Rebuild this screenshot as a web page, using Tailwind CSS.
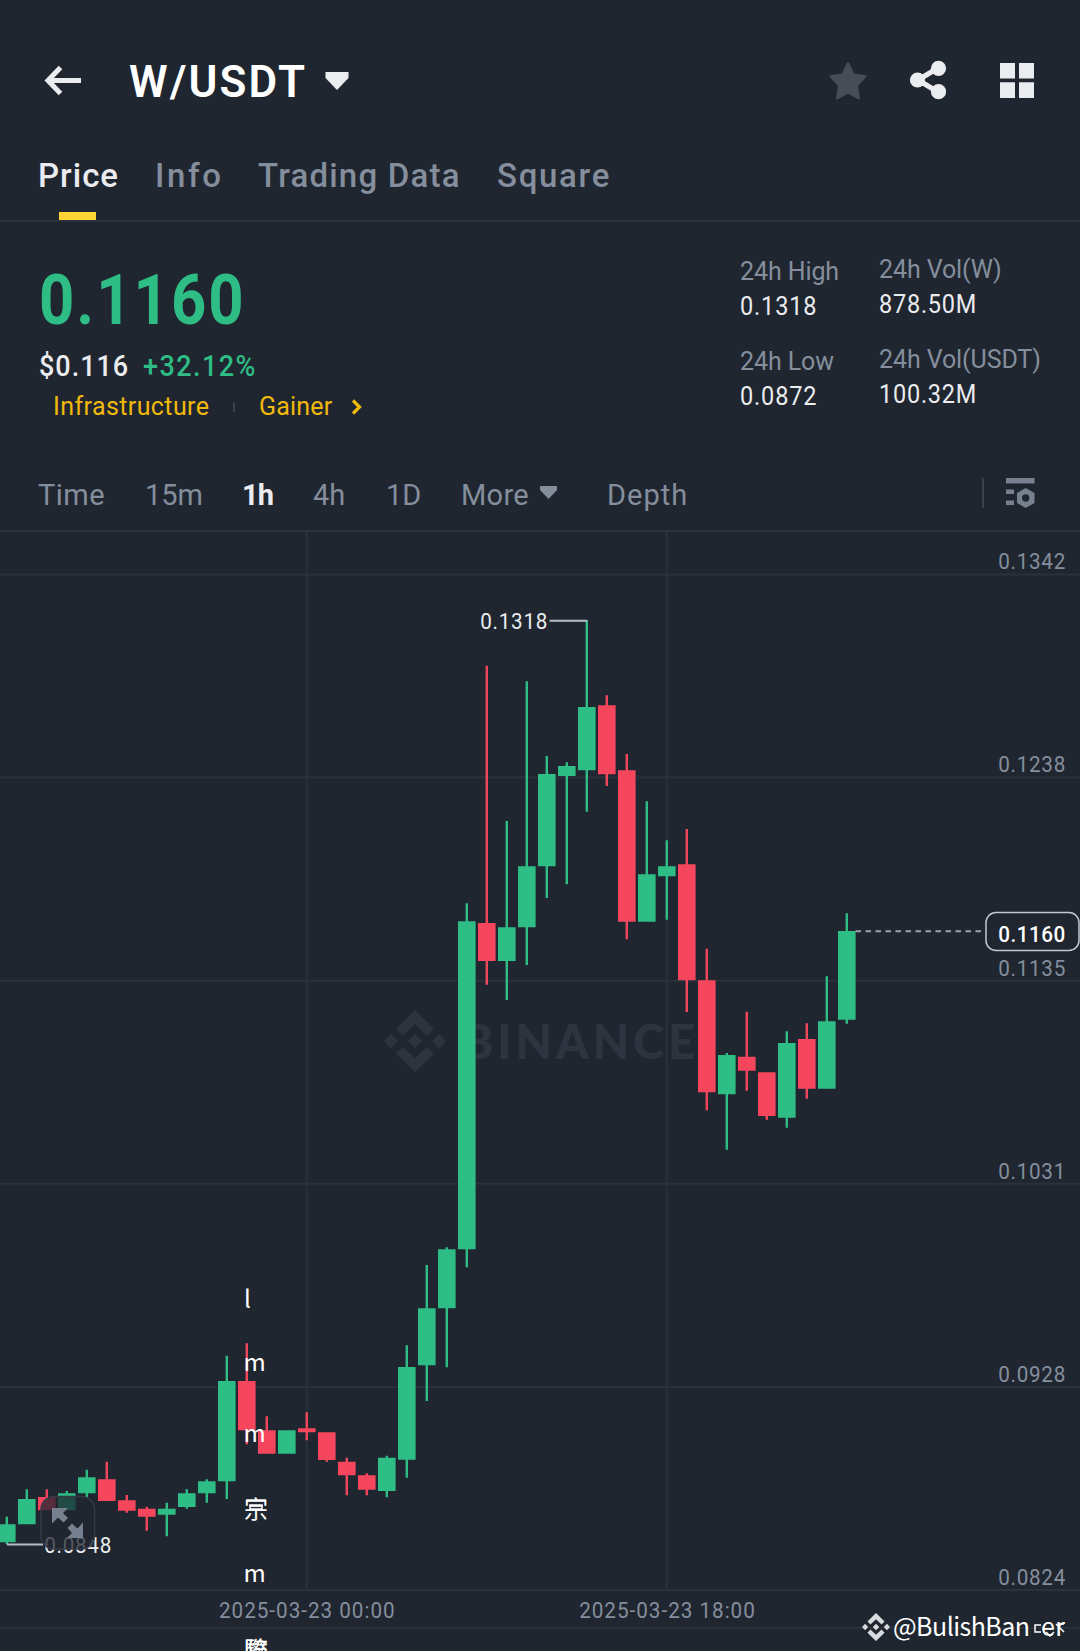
<!DOCTYPE html>
<html lang="en">
<head>
<meta charset="utf-8">
<title>W/USDT</title>
<script src="https://cdn.jsdelivr.net/npm/@tailwindcss/browser@4"></script>
</head>
<body class="bg-[#202630] text-[#eaecef] font-['Roboto',sans-serif]">
<main class="w-[1080px] h-[1651px] overflow-hidden flex flex-col">
  <header class="h-[144px] pt-[20px] pl-[43px] pr-[46px] flex items-center shrink-0">
    <svg class="w-[40px] h-[32px] shrink-0 mb-[2px]" viewBox="0 0 40 32" fill="none" stroke="#eaecef" stroke-width="5"><path d="M38 15.500H6M17.500 2.500L5 15.500l12.500 13"/></svg>
    <h1 class="ml-[46px] w-[196px] text-[44px] leading-[44px] font-semibold text-white whitespace-nowrap tracking-[2.1px]">W/USDT</h1>
    <svg class="w-[24px] h-[20px] shrink-0 mb-[3px]" viewBox="0 0 24 20"><path d="M.5 1h23v6L12 19 .5 7z" fill="#eaecef"/></svg>
    <div class="ml-auto mb-[4px] flex items-center">
      <svg class="w-[38px] h-[40px] mt-[2px]" viewBox="0 0 38 40"><path d="M19 2l5.600 11.500L36.500 15.200l-8.500 9 2 13.300L19 31.700 8 37.500l2-13.300-8.500-9 11.900-1.700z" fill="#474d57" stroke="#474d57" stroke-width="2" stroke-linejoin="round"/></svg>
      <svg class="w-[38px] h-[40px] ml-[42px]" viewBox="0 0 38 40" fill="#eaecef"><path d="M9 20L29 8M9 20l20 12" stroke="#eaecef" stroke-width="5"/><circle cx="8.500" cy="20" r="7.600"/><circle cx="29.500" cy="8.300" r="7.600"/><circle cx="29.500" cy="31.700" r="7.600"/></svg>
      <svg class="w-[34px] h-[35px] ml-[53px]" viewBox="0 0 34 35" fill="#eaecef"><path d="M0 0h15v15.500H0zM19 0h15v15.500H19zM0 19.300h15V35H0zM19 19.300h15V35H19z"/></svg>
    </div>
  </header>
  <nav class="h-[78px] shrink-0 pl-[38px] pt-[12px] flex border-b-2 border-[#2b313b] text-[33px] leading-[40px] font-medium text-[#848e9c] whitespace-nowrap">
    <div class="w-[117px] text-[#eaecef] flex flex-col justify-between tracking-[1px]"><span>Price</span><i class="block w-[37px] h-[8px] ml-[21px] bg-[#fcd535]"></i></div>
    <div class="w-[103px] tracking-[2.6px]">Info</div>
    <div class="w-[239px] tracking-[1.2px]">Trading Data</div>
    <div class="tracking-[1.7px]">Square</div>
  </nav>
  <section class="h-[228px] shrink-0 pl-[39px] flex">
    <div class="w-[701px] pt-[38px] flex flex-col">
      <div class="h-[80px] text-[70px] leading-[80px] font-bold text-[#2ebd85] origin-left scale-x-[.88] tracking-[2.3px]">0.1160</div>
      <div class="mt-[7px] h-[38px] flex text-[30px] leading-[38px] font-medium"><div class="w-[104px] origin-left scale-x-[.9] tracking-[1.1px]">$0.116</div><div class="text-[#2ebd85] origin-left scale-x-[.9] tracking-[1.6px]">+32.12%</div></div>
      <div class="mt-[5px] h-[34px] pl-[14px] flex items-center text-[25px] leading-[34px] text-[#f0b90b]"><div class="w-[180px] tracking-[.4px]">Infrastructure</div><i class="block w-[2px] h-[10px] bg-[#3a414d]"></i><div class="ml-[24px] w-[92px] tracking-[.2px]">Gainer</div><svg class="w-[11px] h-[16px]" viewBox="0 0 11 16" fill="none" stroke="#f0b90b" stroke-width="3.200"><path d="M2 1.500L8.500 8 2 14.500"/></svg></div>
    </div>
    <dl class="w-[139px] pt-[34px] text-[25px] leading-[32px] whitespace-nowrap">
      <dt class="text-[#848e9c] h-[35px] tracking-[-.1px]">24h High</dt><dd class="h-[55px] origin-left scale-x-[.94] tracking-[.9px]">0.1318</dd>
      <dt class="text-[#848e9c] h-[35px] tracking-[-.1px]">24h Low</dt><dd class="origin-left scale-x-[.94] tracking-[.9px]">0.0872</dd>
    </dl>
    <dl class="pt-[32px] text-[25px] leading-[32px] whitespace-nowrap">
      <dt class="text-[#848e9c] h-[35px] tracking-[-.1px]">24h Vol(W)</dt><dd class="h-[55px] origin-left scale-x-[.94] tracking-[.8px]">878.50M</dd>
      <dt class="text-[#848e9c] h-[35px] tracking-[-.1px]">24h Vol(USDT)</dt><dd class="origin-left scale-x-[.94] tracking-[.8px]">100.32M</dd>
    </dl>
  </section>
  <nav class="h-[82px] shrink-0 pt-[26px] pl-[38px] pr-[45px] flex text-[29px] leading-[38px] text-[#848e9c] whitespace-nowrap border-b-2 border-[#2b313b]">
    <div class="w-[107px] tracking-[.5px]">Time</div>
    <div class="w-[97px]">15m</div>
    <div class="w-[71px] text-[#eaecef] font-bold tracking-[-1px]">1h</div>
    <div class="w-[73px]">4h</div>
    <div class="w-[75px]">1D</div>
    <div class="w-[79px] tracking-[.3px]">More</div>
    <svg class="w-[17px] h-[14px] mt-[10px]" viewBox="0 0 17 14"><path d="M0 0h17v4L8.500 13 0 4z" fill="#848e9c"/></svg>
    <div class="ml-[50px] tracking-[1px]">Depth</div>
    <i class="ml-auto mt-[2px] block w-[2px] h-[30px] bg-[#3a414d]"></i>
    <svg class="ml-[22px] mt-[2px] w-[29px] h-[30px]" viewBox="0 0 29 30" fill="#76808f"><path d="M0 0h28.500v5.500H0zM0 11.500h8V16H0zM0 22.500h8V27H0z"/><path fill-rule="evenodd" d="M19.700 10l8.800 5v10l-8.800 5-8.700-5V15zm0 6.300a3.700 3.700 0 100 7.400 3.700 3.700 0 000-7.400z"/></svg>
  </nav>
  <svg id="chart" class="block w-[1080px] h-[1119px] shrink-0" viewBox="0 532 1080 1119" font-size="22.500">
    <path d="M0 574.500H1080M0 777.500H1080M0 980.700H1080M0 1183.800H1080M0 1387H1080M0 1590H1080M0 1628H1080M306.700 532V1590M666.700 532V1590" stroke="#2b313b" stroke-width="2" fill="none"/>
    <defs><path id="bnb" d="M0-31L19-12.500 12.300-5.500 0-17.300-12.300-5.500-19-12.500zM0-7.200L7.200 0 0 7.200-7.200 0zM-24.300-7.200L-17.400 0-24.300 7.200-31 0zM24.300-7.200L31 0 24.300 7.200 17.400 0zM0 31L19 12.500 12.300 5.500 0 17.300-12.300 5.500-19 12.500z"/></defs>
    <g fill="#2e343f"><use href="#bnb" x="415" y="1041.300"/><text x="462" y="1058.500" font-family="Lato" font-weight="900" font-size="47" textLength="233">BINANCE</text></g>
    <g id="candles"></g>
    <g fill="#848e9c" transform="scale(.92 1)">
      <text x="1085" y="569" textLength="73">0.1342</text><text x="1085" y="772" textLength="73">0.1238</text><text x="1085" y="976" textLength="73">0.1135</text><text x="1085" y="1179" textLength="73">0.1031</text><text x="1085" y="1382" textLength="73">0.0928</text><text x="1085" y="1585" textLength="73">0.0824</text>
      <text x="238" y="1618.500" textLength="191">2025-03-23 00:00</text><text x="629.500" y="1618.500" textLength="191">2025-03-23 18:00</text>
    </g>
    <path d="M549.500 620.700H587.500M7 1544.500H43" stroke="#b7bdc6" stroke-width="2"/>
    <g fill="#eaecef" transform="scale(.92 1)"><text x="522" y="629" textLength="73">0.1318</text><text x="48" y="1553.500" textLength="73">0.0848</text></g>
    <path d="M855.500 931.300H982" stroke="#9aa1ad" stroke-width="2" stroke-dasharray="5.500 4.500"/>
    <rect x="986" y="912.500" width="93" height="38" rx="10" fill="#202630" stroke="#c3c7cf" stroke-width="1.500"/>
    <text transform="scale(.92 1)" x="1085" y="942" textLength="73" fill="#fff" font-weight="500">0.1160</text>
    <rect x="41" y="1496.500" width="53.500" height="52.500" rx="13" fill="#202630" fill-opacity=".75" stroke="#343b47" stroke-width="1.500"/>
    <path d="M52 1508h16l-5 5 5 5-4.500 4.500-5.500-5-6 6zM83 1538H67l5-5-4.500-5 4.500-4.500 5.500 5 5.500-6z" fill="#76808f"/>
    <g fill="#fff" font-family="Noto Sans CJK SC" font-size="24"><text x="244" y="1308">l</text><text x="243.500" y="1371">m</text><text x="243.500" y="1441.500">m</text><text x="244" y="1518">宗</text><text x="243.500" y="1582">m</text><text x="244" y="1659">驗</text><text x="244" y="1659">際</text></g>
    <path d="M246 1500h20M250 1505h12v4h-12z" stroke="#fff" stroke-width="1.500" fill="none"/>
    <use href="#bnb" transform="translate(876 1627) scale(.45)" fill="#d9dbdf"/>
    <g fill="#fff" font-family="Noto Sans CJK SC" font-size="25"><text x="893" y="1636" textLength="137">@BulishBan</text><text x="1041" y="1636" textLength="24">er</text></g>
    <path d="M1041 1625h-6v7h6M1056 1624l8 8M1058 1624h6M1046 1632l4 4 4-4" stroke="#fff" stroke-width="1.500" fill="none"/>
  </svg>
</main>
<script>
// [colour, high, body top, body bottom, low], one entry per hour
const candles = [
['g',1516.7,1524.3,1542.3,1544.3],['g',1489.3,1499,1524.3,1524.3],['r',1489.3,1497,1510.3,1510.3],['g',1491,1493.3,1510.3,1510.3],
['g',1469.7,1477.3,1493.3,1497],['r',1461.7,1479.3,1501,1501],['r',1495,1500.3,1510.7,1512.7],['r',1506.7,1508.7,1516.7,1530.7],
['g',1502.7,1508.7,1514.7,1536.3],['g',1489.3,1493.3,1507,1508.7],['g',1479.3,1481.3,1493.3,1502.7],['g',1355.7,1381,1481.3,1499],
['r',1343.3,1381,1430.3,1444.3],['r',1416.3,1430.3,1453.7,1453.7],['g',1430.3,1430.3,1453.7,1453.7],['r',1412.3,1428.3,1432.3,1440.3],
['r',1432.3,1432.3,1460,1461.7],['r',1457.7,1461.7,1475.3,1495.3],['r',1473.3,1475.3,1489.7,1495.3],['g',1455.7,1457.7,1491,1497.3],
['g',1345.3,1367,1459.7,1477.7],['g',1265,1308.3,1365.3,1401],['g',1247.3,1249.3,1308.3,1367.3],['g',903.3,921.3,1249.3,1267.3],
['r',665.7,923,961,984.7],['g',821,927.3,961,1000],['g',681.3,866.3,927.3,965],['g',756,774,866.3,898],
['g',762.3,766,776,884.3],['g',620.7,707,770.3,811.7],['r',695.3,705.3,774.3,786],['r',754,770.3,921.7,939.3],
['g',801.3,874.3,921.7,921.7],['g',840.3,866.3,876.3,919.7],['r',829,864.3,980.3,1012],['r',948.7,980.3,1092.3,1110.3],
['g',1053,1055,1094.3,1149.7],['r',1011.7,1056.7,1070.7,1090.7],['r',1072.3,1072.3,1116,1119.7],['g',1031.3,1043,1117.7,1127.7],
['r',1023.3,1039,1088.7,1098.7],['g',976.3,1021.3,1088.7,1088.7],['g',913.3,931,1019.7,1023.7]];
document.getElementById('candles').innerHTML = candles.map(([c,h,t,b,l],i)=>{
  const x = 6.8+20*i, f = c==='g' ? '#2ebd85' : '#f6465d';
  return `<path fill="${f}" d="M${x-1.2} ${h}h2.400V${l}h-2.400zM${x-8.800} ${t}h17.600V${b}h-17.600z"/>`;
}).join('');
</script>
</body>
</html>
